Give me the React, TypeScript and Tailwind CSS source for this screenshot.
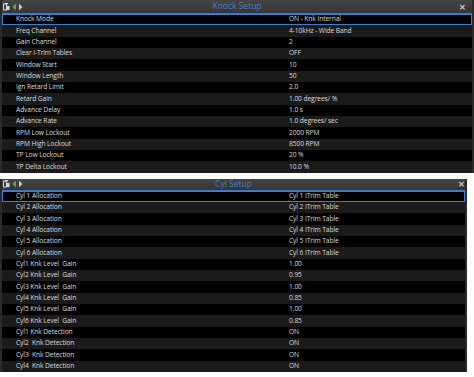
import React from "react";

type Row = [string, string];

const knockRows: Row[] = [
  ["Knock Mode", "ON - Knk Internal"],
  ["Freq Channel", "4-10kHz - Wide Band"],
  ["Gain Channel", "2"],
  ["Clear I-Trim Tables", "OFF"],
  ["Window Start", "10"],
  ["Window Length", "50"],
  ["Ign Retard Limit", "2.0"],
  ["Retard Gain", "1.00 degrees/ %"],
  ["Advance Delay", "1.0 s"],
  ["Advance Rate", "1.0 degrees/ sec"],
  ["RPM Low Lockout", "2000 RPM"],
  ["RPM High Lockout", "8500 RPM"],
  ["TP Low Lockout", "20 %"],
  ["TP Delta Lockout", "10.0 %"],
];

const cylRows: Row[] = [
  ["Cyl 1 Allocation", "Cyl 1 ITrim Table"],
  ["Cyl 2 Allocation", "Cyl 2 ITrim Table"],
  ["Cyl 3 Allocation", "Cyl 3 ITrim Table"],
  ["Cyl 4 Allocation", "Cyl 4 ITrim Table"],
  ["Cyl 5 Allocation", "Cyl 5 ITrim Table"],
  ["Cyl 6 Allocation", "Cyl 6 ITrim Table"],
  ["Cyl1 Knk Level  Gain", "1.00"],
  ["Cyl2 Knk Level  Gain", "0.95"],
  ["Cyl3 Knk Level  Gain", "1.00"],
  ["Cyl4 Knk Level  Gain", "0.85"],
  ["Cyl5 Knk Level  Gain", "1.00"],
  ["Cyl6 Knk Level  Gain", "0.85"],
  ["Cyl1 Knk Detection", "ON"],
  ["Cyl2  Knk Detection", "ON"],
  ["Cyl3  Knk Detection", "ON"],
  ["Cyl4  Knk Detection", "ON"],
];

function TitleIcons() {
  return (
    <div className="flex items-center gap-[2px] pl-[1px]">
      <svg width="7" height="8" viewBox="0 0 7 8">
        <rect x="0.5" y="1" width="3" height="6" fill="none" stroke="#d8d8d8" strokeWidth="1" />
        <rect x="4" y="3" width="2.5" height="4" fill="#d8d8d8" />
        <rect x="2" y="0" width="3" height="1.2" fill="#d8d8d8" />
      </svg>
      <svg width="11" height="8" viewBox="0 0 11 8">
        <polygon points="4,0.5 0.5,4 4,7.5" fill="#4caf50" />
        <polygon points="7,0.5 10.5,4 7,7.5" fill="#c8c8c8" />
      </svg>
    </div>
  );
}

function Panel({
  title,
  rows,
  width,
  titleH,
  closePad,
}: {
  title: string;
  rows: Row[];
  width: string;
  titleH: string;
  closePad: string;
}) {
  return (
    <div className={`${width} bg-[#111] border-x-[2px] border-[#2a2a2a] flex flex-col`}>
      <div
        className={`${titleH} relative flex items-center justify-between bg-gradient-to-b from-[#454545] to-[#363535] border-b border-[#3b78c9]`}
      >
        <TitleIcons />
        <span className="absolute inset-x-0 text-center text-[8.5px] leading-none text-[#4a7fc4]">
          {title}
        </span>
        <span className={`${closePad} text-[8px] leading-none font-bold text-[#c8c8c8]`}>✕</span>
      </div>
      {rows.map((r, i) => (
        <div
          key={i}
          className={`h-[11.33px] flex items-center text-[6.7px] tracking-[-0.1px] leading-none text-[#dcdcdc] ${
            i === 0
              ? "bg-black outline outline-[1.5px] -outline-offset-[1.5px] outline-[#3d7fd6]"
              : i % 2 === 1
              ? "bg-[#1b1b1b]"
              : "bg-black"
          }`}
        >
          <span className="w-[285px] pl-[14px] whitespace-pre">{r[0]}</span>
          <span className="pl-[2px] whitespace-pre">{r[1]}</span>
        </div>
      ))}
    </div>
  );
}

export default function App() {
  return (
    <div className="w-[474px] h-[377px] bg-white overflow-hidden font-['Open_Sans',sans-serif]">
      <Panel title="Knock Setup" rows={knockRows} width="w-[474px]" titleH="h-[14px]" closePad="pr-[6px]" />
      <div className="h-[6px]" />
      <Panel title="Cyl Setup" rows={cylRows} width="w-[467px]" titleH="h-[12px]" closePad="pr-[0px]" />
    </div>
  );
}
